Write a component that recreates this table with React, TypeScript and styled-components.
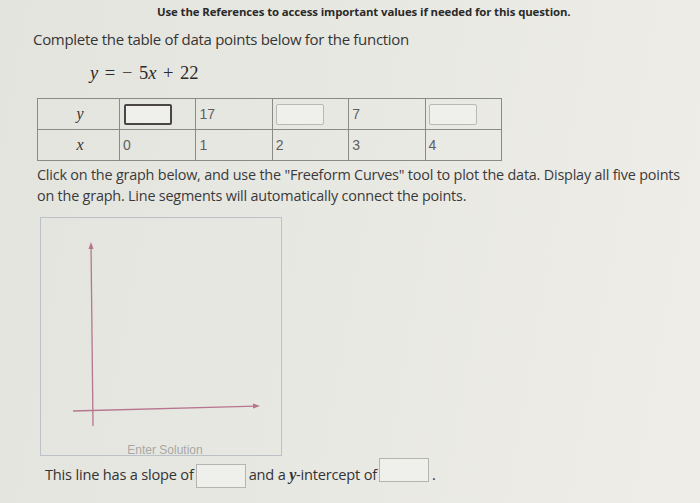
import React from "react";
import styled, { createGlobalStyle } from "styled-components";

const Global = createGlobalStyle`
  html, body { margin: 0; padding: 0; }
  body {
    width: 700px;
    height: 503px;
    overflow: hidden;
    background: linear-gradient(100deg, #e4e4df 0%, #e8e8e3 45%, #eeede8 100%);
    font-family: "Open Sans", "Liberation Sans", sans-serif;
    color: #2f2f2f;
  }
`;

const Page = styled.div`
  display: flex;
  flex-direction: column;
  padding: 4px 0 0 0;
`;

const Notice = styled.div`
  margin-left: 157px;
  font-size: 11.4px;
  font-weight: 700;
  color: #2a2a2a;
  letter-spacing: -0.1px;
`;

const Prompt = styled.div`
  margin: 10px 0 0 33px;
  font-size: 15px;
  color: #353535;
  letter-spacing: -0.3px;
`;

const Equation = styled.div`
  margin: 14px 0 0 90px;
  font-family: "Liberation Serif", "DejaVu Serif", serif;
  font-size: 18.5px;
  color: #2a2a2a;
  word-spacing: 2px;
  i { font-style: italic; }
`;

const Table = styled.table`
  margin: 14px 0 0 37px;
  border-collapse: collapse;
  width: 465px;
  table-layout: fixed;
`;

const Cell = styled.td<{ $label?: boolean }>`
  border: 1px solid #8a8a86;
  height: 30px;
  padding: 0 0 0 3px;
  font-family: ${(p) => (p.$label ? '"Liberation Serif", serif' : '"Liberation Sans", sans-serif')};
  font-style: ${(p) => (p.$label ? "italic" : "normal")};
  font-size: ${(p) => (p.$label ? "16px" : "14px")};
  color: ${(p) => (p.$label ? "#333" : "#5e5e5e")};
  text-align: ${(p) => (p.$label ? "center" : "left")};
  width: ${(p) => (p.$label ? "78px" : "auto")};
`;

const CellBox = styled.div<{ $focus?: boolean }>`
  width: 48px;
  height: 21px;
  border: ${(p) => (p.$focus ? "2px solid #4a4646" : "1px solid #b9b9b6")};
  border-radius: 2px;
  background: #efefeb;
  box-sizing: border-box;
  margin-left: ${(p) => (p.$focus ? "1px" : "0")};
`;

const Instructions = styled.div`
  margin: 3px 0 0 37px;
  width: 650px;
  font-size: 14.4px;
  line-height: 21px;
  color: #3a3a3a;
  letter-spacing: -0.2px;
`;

const GraphBox = styled.div`
  margin: 11px 0 0 40px;
  width: 242px;
  height: 239px;
  border: 1px solid #bcc0c9;
  box-sizing: border-box;
  display: flex;
  flex-direction: column;
  align-items: center;
  justify-content: flex-end;
  position: relative;
`;

const Axes = styled.svg`
  position: absolute;
  left: 0;
  top: 0;
`;

const EnterLabel = styled.div`
  font-family: "Liberation Sans", Arial, sans-serif;
  font-size: 12px;
  color: #a7a7a5;
  margin: 0 0 -2px 8px;
`;

const AnswerRow = styled.div`
  margin: 6px 0 0 45px;
  font-size: 14.6px;
  line-height: 24px;
  color: #333;
  letter-spacing: -0.2px;
  white-space: nowrap;
`;

const AnswerBox = styled.span<{ $shift?: number }>`
  display: inline-block;
  vertical-align: middle;
  width: 50px;
  height: 24px;
  border: 1px solid #b4b4b0;
  background: #efefeb;
  box-sizing: border-box;
  margin: 0 3px 0 2px;
  position: relative;
  top: ${(p) => p.$shift ?? 0}px;
`;

const MathY = styled.i`
  font-family: "Liberation Serif", serif;
  font-weight: 700;
  font-size: 16px;
`;

export default function App() {
  const ys: (string | null)[] = [null, "17", null, "7", null];
  const xs = ["0", "1", "2", "3", "4"];
  return (
    <>
      <Global />
      <Page>
        <Notice>Use the References to access important values if needed for this question.</Notice>
        <Prompt>Complete the table of data points below for the function</Prompt>
        <Equation>
          <i>y</i> = − 5<i>x</i> + 22
        </Equation>
        <Table>
          <tbody>
            <tr>
              <Cell $label>y</Cell>
              {ys.map((v, i) => (
                <Cell key={i}>{v ?? <CellBox $focus={i === 0} />}</Cell>
              ))}
            </tr>
            <tr>
              <Cell $label>x</Cell>
              {xs.map((v) => (
                <Cell key={v}>{v}</Cell>
              ))}
            </tr>
          </tbody>
        </Table>
        <Instructions>
          Click on the graph below, and use the "Freeform Curves" tool to plot the data. Display all five points on the graph. Line segments will automatically connect the points.
        </Instructions>
        <GraphBox>
          <Axes width="242" height="239" viewBox="0 0 242 239">
            <g stroke="#b7768f" strokeWidth="1.3" fill="none">
              <line x1="50" y1="26" x2="52" y2="208" />
              <line x1="32" y1="193" x2="216" y2="188" />
            </g>
            <path d="M50 24 L47.5 31 L52.5 31 Z" fill="#b7768f" />
            <path d="M219 188 L212 185.5 L212 190.5 Z" fill="#b7768f" />
          </Axes>
          <EnterLabel>Enter Solution</EnterLabel>
        </GraphBox>
        <AnswerRow>
          This line has a slope of
          <AnswerBox $shift={0} />
          and a <MathY>y</MathY>-intercept of
          <AnswerBox $shift={-6} />.
        </AnswerRow>
      </Page>
    </>
  );
}
